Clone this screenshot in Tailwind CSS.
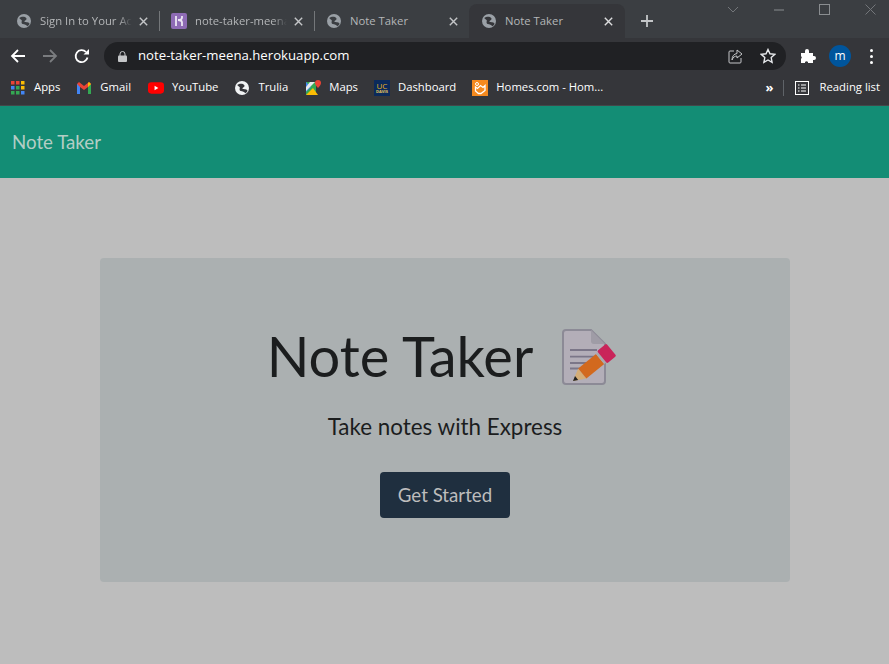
<!DOCTYPE html>
<html lang="en">
<head>
  <meta charset="UTF-8" />
  <title>Note Taker</title>
  <script src="https://cdn.jsdelivr.net/npm/@tailwindcss/browser@4"></script>
</head>
<body class="h-[664px] w-[889px] overflow-hidden bg-[#bdbdbd] font-['Lato',sans-serif]">

  <!-- browser tabs -->
  <div class="flex h-[38px] bg-[#3b3e42] pl-[4px] pt-[4px] font-['Open_Sans',sans-serif] text-[11.3px] text-[#b4b6b8]">
    <div class="flex w-[155px] items-center pl-[13px]">
      <svg class="h-[14px] w-[14px] shrink-0" viewBox="0 0 16 16"><circle cx="8" cy="8" r="8" fill="#9aa0a6"/><path d="M2.500 4.500C5 2.500 9 2.500 10.500 4.500S8.500 7.500 8.500 8.500s3 .2 5 1.500-.5 3.500-2 4c-.5-1.800-3-2.500-5-2.700S5.500 8.500 5.500 7.500 3.500 6 2.500 4.500z" fill="#3b3e42"/></svg>
      <span class="ml-[9px] w-[92px] overflow-hidden whitespace-nowrap [mask-image:linear-gradient(90deg,#000_85%,transparent)]">Sign In to Your Account</span>
      <svg class="ml-[7px] h-[9px] w-[9px] shrink-0" viewBox="0 0 9 9"><path d="M.8.8l7.4 7.4M8.200.8L.8 8.200" stroke="#c4c6c8" stroke-width="1.400"/></svg>
    </div>
    <div class="my-[7px] w-px bg-[#74777a]"></div>
    <div class="flex w-[154px] items-center pl-[11px]">
      <svg class="h-[16px] w-[16px] shrink-0" viewBox="0 0 16 16"><rect width="16" height="16" rx="2" fill="#8e6bb5"/><path d="M5 3v10M11 3v1.500C11 6 9.500 7 7 7M7 7c3 0 4 1 4 2.500V13" stroke="#ece6f4" stroke-width="1.800" fill="none"/></svg>
      <span class="ml-[8px] w-[92px] overflow-hidden whitespace-nowrap [mask-image:linear-gradient(90deg,#000_85%,transparent)]">note-taker-meena.herokuapp.com</span>
      <svg class="ml-[7px] h-[9px] w-[9px] shrink-0" viewBox="0 0 9 9"><path d="M.8.8l7.4 7.4M8.200.8L.8 8.200" stroke="#c4c6c8" stroke-width="1.400"/></svg>
    </div>
    <div class="my-[7px] w-px bg-[#74777a]"></div>
    <div class="flex w-[154px] items-center pl-[12px]">
      <svg class="h-[14px] w-[14px] shrink-0" viewBox="0 0 16 16"><circle cx="8" cy="8" r="8" fill="#9aa0a6"/><path d="M2.500 4.500C5 2.500 9 2.500 10.500 4.500S8.500 7.500 8.500 8.500s3 .2 5 1.500-.5 3.500-2 4c-.5-1.800-3-2.500-5-2.700S5.500 8.500 5.500 7.500 3.500 6 2.500 4.500z" fill="#3b3e42"/></svg>
      <span class="ml-[9px] w-[92px] whitespace-nowrap">Note Taker</span>
      <svg class="ml-[7px] h-[9px] w-[9px] shrink-0" viewBox="0 0 9 9"><path d="M.8.8l7.4 7.4M8.200.8L.8 8.200" stroke="#c4c6c8" stroke-width="1.400"/></svg>
    </div>
    <div class="flex w-[156px] items-center rounded-t-[8px] bg-[#35363a] pl-[13px]">
      <svg class="h-[14px] w-[14px] shrink-0" viewBox="0 0 16 16"><circle cx="8" cy="8" r="8" fill="#9aa0a6"/><path d="M2.500 4.500C5 2.500 9 2.500 10.500 4.500S8.500 7.500 8.500 8.500s3 .2 5 1.500-.5 3.500-2 4c-.5-1.800-3-2.500-5-2.700S5.500 8.500 5.500 7.500 3.500 6 2.500 4.500z" fill="#35363a"/></svg>
      <span class="ml-[9px] w-[92px] whitespace-nowrap">Note Taker</span>
      <svg class="ml-[7px] h-[9px] w-[9px] shrink-0" viewBox="0 0 9 9"><path d="M.8.8l7.4 7.4M8.200.8L.8 8.200" stroke="#dcddde" stroke-width="1.400"/></svg>
    </div>
    <svg class="ml-[15px] mt-[10px] h-[14px] w-[14px]" viewBox="0 0 14 14"><path d="M7 1v12M1 7h12" stroke="#c4c6c8" stroke-width="1.800"/></svg>
    <div class="ml-[72px] -mt-[4px] flex h-[20px] items-center gap-[32px]">
      <svg class="h-[14px] w-[14px]" viewBox="0 0 14 14"><path d="M2 4l5 5 5-5" stroke="#73767a" fill="none"/></svg>
      <svg class="h-[14px] w-[14px]" viewBox="0 0 14 14"><path d="M2 7h10" stroke="#8a8d90"/></svg>
      <svg class="h-[14px] w-[14px]" viewBox="0 0 14 14"><rect x="1.500" y="1.500" width="10" height="10" fill="none" stroke="#8a8d90"/></svg>
      <svg class="h-[14px] w-[14px]" viewBox="0 0 14 14"><path d="M1.500 1.500l10 10M11.500 1.500l-10 10" stroke="#73767a"/></svg>
    </div>
  </div>

  <!-- address bar -->
  <div class="flex h-[36px] items-center bg-[#35363a] pl-[10px]">
    <svg class="h-[16px] w-[16px]" viewBox="0 0 16 16"><path d="M15 8H2M8 2L2 8l6 6" stroke="#fff" stroke-width="1.800" fill="none"/></svg>
    <svg class="ml-[16px] h-[16px] w-[16px]" viewBox="0 0 16 16"><path d="M1 8h13M8 2l6 6-6 6" stroke="#7a7c7f" stroke-width="1.800" fill="none"/></svg>
    <svg class="ml-[16px] h-[16px] w-[16px]" viewBox="0 0 16 16"><path d="M13.500 9.500A6 6 0 1 1 12 4" stroke="#fff" stroke-width="1.800" fill="none"/><path d="M9.500 6.500H15V1z" fill="#fff"/></svg>
    <div class="ml-[14px] flex h-[28px] w-[682px] items-center rounded-full bg-[#202124] pl-[14px]">
      <svg class="h-[11px] w-[9px]" viewBox="0 0 9 11"><path d="M2 5V3a2.500 2.500 0 0 1 5 0v2" stroke="#c4c6c8" fill="none"/><rect y="4.500" width="9" height="6.500" rx="1" fill="#c4c6c8"/></svg>
      <span class="ml-[11px] font-['Open_Sans',sans-serif] text-[13.2px] text-white">note-taker-meena.herokuapp.com</span>
      <svg class="ml-auto h-[15px] w-[15px]" viewBox="0 0 15 15"><path d="M6 2H2a1 1 0 0 0-1 1v10a1 1 0 0 0 1 1h10a1 1 0 0 0 1-1v-4" stroke="#c4c6c8" fill="none"/><path d="M9 1l5 4-5 4V7C7 7 5 8 4 11c0-4 2-6 5-6.500z" stroke="#c4c6c8" fill="none"/></svg>
      <svg class="ml-[17px] mr-[10px] h-[16px] w-[16px]" viewBox="0 0 16 16"><path d="M8 1.500l2 4.300 4.700.6-3.500 3.200.9 4.700L8 12l-4.100 2.300.9-4.700L1.300 6.400 6 5.800z" stroke="#e8eaed" stroke-width="1.400" fill="none"/></svg>
    </div>
    <svg class="ml-[14px] h-[16px] w-[16px]" viewBox="0 0 16 16"><path d="M1 5h4V3a2 2 0 0 1 4 0v2h4v3h1a2 2 0 0 1 0 4h-1v3H8v-1a2 2 0 0 0-3 0v1H1v-4a2 2 0 0 0 0-3z" fill="#fff"/></svg>
    <div class="ml-[13px] flex h-[22px] w-[22px] items-center justify-center rounded-full bg-[#00559c] font-['Open_Sans',sans-serif] text-[12px] text-white">m</div>
    <div class="ml-[19px] flex flex-col gap-[3px]">
      <span class="h-[3px] w-[3px] rounded-full bg-white"></span>
      <span class="h-[3px] w-[3px] rounded-full bg-white"></span>
      <span class="h-[3px] w-[3px] rounded-full bg-white"></span>
    </div>
  </div>

  <!-- bookmarks -->
  <div class="flex h-[32px] items-center border-b border-[#44474a] bg-[#35363a] pb-[4px] pl-[11px] font-['Open_Sans',sans-serif] text-[11.3px] text-white">
    <svg class="h-[14px] w-[14px]" viewBox="0 0 14 14">
      <rect width="3.500" height="3.500" fill="#ea4335"/><rect x="5" width="3.500" height="3.500" fill="#ea4335"/><rect x="10" width="3.500" height="3.500" fill="#fbbc04"/>
      <rect y="5" width="3.500" height="3.500" fill="#4285f4"/><rect x="5" y="5" width="3.500" height="3.500" fill="#34a853"/><rect x="10" y="5" width="3.500" height="3.500" fill="#fbbc04"/>
      <rect y="10" width="3.500" height="3.500" fill="#34a853"/><rect x="5" y="10" width="3.500" height="3.500" fill="#34a853"/><rect x="10" y="10" width="3.500" height="3.500" fill="#4285f4"/>
    </svg>
    <span class="ml-[9px]">Apps</span>
    <svg class="ml-[17px] h-[12px] w-[14px]" viewBox="0 0 14 12"><path d="M0 2v10h3V5l4 3 4-3v7h3V2L12 0 7 4 2 0z" fill="#ea4335"/><path d="M0 2v10h3V5z" fill="#4285f4"/><path d="M11 5v7h3V2z" fill="#34a853"/><path d="M14 2l-2-2-1 1v4z" fill="#fbbc04"/></svg>
    <span class="ml-[9px]">Gmail</span>
    <svg class="ml-[17px] h-[12px] w-[16px]" viewBox="0 0 17 12"><rect width="17" height="12" rx="3.500" fill="#f00"/><path d="M7 3.500v5l4-2.500z" fill="#fff"/></svg>
    <span class="ml-[8px]">YouTube</span>
    <svg class="ml-[17px] h-[14px] w-[14px]" viewBox="0 0 16 16"><circle cx="8" cy="8" r="8" fill="#f1f3f4"/><path d="M2.500 4.500C5 2.500 9 2.500 10.500 4.500S8.500 7.500 8.500 8.500s3 .2 5 1.500-.5 3.500-2 4c-.5-1.800-3-2.500-5-2.700S5.500 8.500 5.500 7.500 3.500 6 2.500 4.500z" fill="#35363a"/></svg>
    <span class="ml-[9px]">Trulia</span>
    <svg class="ml-[18px] h-[15px] w-[15px]" viewBox="0 0 15 15"><path d="M0 2h10v13H0z" fill="#34a853"/><path d="M0 15l7-7 5 7z" fill="#fbbc04"/><path d="M0 2l5 5-5 5z" fill="#4285f4"/><path d="M4 2h5L0 11V7z" fill="#e8eaed"/><path d="M12 0a3 3 0 0 1 3 3c0 2-3 5-3 5S9 5 9 3a3 3 0 0 1 3-3z" fill="#ea4335"/></svg>
    <span class="ml-[8px]">Maps</span>
    <div class="ml-[16px] flex h-[16px] w-[16px] shrink-0 flex-col items-center justify-center bg-[#0b2a5b] text-[8px] leading-[9px] text-[#e6b422]">UC<span class="h-[4px] text-[4px] leading-[4px] font-bold text-[#e6c860]">DAVIS</span></div>
    <span class="ml-[8px]">Dashboard</span>
    <svg class="ml-[16px] h-[16px] w-[16px]" viewBox="0 0 16 16"><rect width="16" height="16" fill="#f58a1f"/><circle cx="5" cy="4" r="1.500" fill="none" stroke="#fff"/><path d="M3.500 7l2 1.500L8.500 5.500l2.500 2 2-2v5L9 13.500H6.500L3.500 11z" stroke="#fff" stroke-width="1.300" fill="none"/></svg>
    <span class="ml-[8px]">Homes.com - Hom...</span>
    <span class="ml-auto text-[13px] font-bold">»</span>
    <div class="ml-[9px] h-[16px] w-px bg-[#5f6368]"></div>
    <svg class="ml-[11px] h-[14px] w-[14px]" viewBox="0 0 14 14"><rect x=".5" y=".5" width="13" height="13" fill="none" stroke="#fff"/><path d="M3 4h1.500M6 4h5M3 7h1.500M6 7h5M3 10h1.500M6 10h5" stroke="#fff"/></svg>
    <span class="ml-[11px] mr-[9px]">Reading list</span>
  </div>

  <!-- page navbar -->
  <nav class="flex h-[72px] items-center bg-[#138d75] pl-[12px]">
    <span class="text-[18.7px] text-[#b4cdc5]">Note Taker</span>
  </nav>

  <!-- hero -->
  <main class="pl-[100px] pr-[99px] pt-[80px]">
    <section class="flex h-[324px] flex-col items-center rounded-[4px] bg-[#abb0b1] pt-[64px] text-[#1b1d1e]">
      <div class="mr-[8px] flex items-start">
        <h1 class="text-[56px] leading-[67px] font-normal">Note Taker</h1>
        <svg class="ml-[28px] mt-[6px] h-[58px] w-[54px] overflow-visible" viewBox="0 0 54 58">
          <path d="M2 5a3 3 0 0 1 3-3h25l14 14v37a3 3 0 0 1-3 3H5a3 3 0 0 1-3-3z" fill="#b3aeb8" stroke="#8c8a96" stroke-width="2"/>
          <path d="M30 2l14 14H33a3 3 0 0 1-3-3z" fill="#9f9ca6"/>
          <path d="M9 22h27M9 28.700h27M9 35h24M9 40.500h16" stroke="#7b7688" stroke-width="1.800"/>
          <path d="M12 53l5.200-12.600 8.200 10z" fill="#d4ad77"/>
          <path d="M12 53l2-4.900 3.200 3.800z" fill="#222"/>
          <path d="M17.200 40.400L35 25.900l8.200 10-17.800 14.500z" fill="#d2691e"/>
          <path d="M35 25.900l3.100-2.500 8.200 10-3.100 2.500z" fill="#a9a9ad"/>
          <path d="M38.100 23.400l7-5.700 8.200 10-7 5.700z" fill="#c9245a" stroke="#c9245a" stroke-width="3" stroke-linejoin="round"/>
        </svg>
      </div>
      <p class="mt-[23px] text-[22.4px] leading-[29px]">Take notes with Express</p>
      <button class="mt-[31px] h-[46px] w-[130px] rounded-[4px] bg-[#1f2f3f] text-[18.7px] text-[#bdbdbd]">Get Started</button>
    </section>
  </main>
</body>
</html>
